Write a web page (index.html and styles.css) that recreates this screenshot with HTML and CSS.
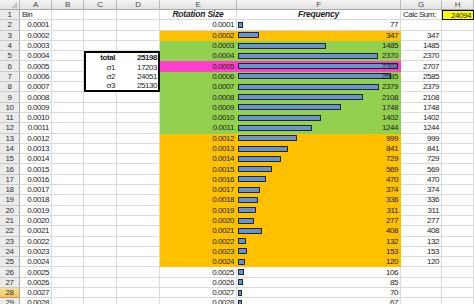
FILE: index.html
```html
<!DOCTYPE html>
<html lang="en">
<head>
  <meta charset="UTF-8">
  <meta name="viewport" content="width=device-width, initial-scale=1.0">
  <title>Rotation Size</title>
  <link rel="stylesheet" href="styles.css">
</head>
<body>
  <div class="sheet" id="sheet">
    <div class="stats">
      <span class="st-lbl bold">total</span><span class="st-val bold">25198</span>
      <span class="st-lbl">σ1</span><span class="st-val">17203</span>
      <span class="st-lbl">σ2</span><span class="st-val">24051</span>
      <span class="st-lbl">σ3</span><span class="st-val">25130</span>
    </div>
  </div>
  <script>
    const sheet = document.getElementById("sheet");
    const letters = ["", "A", "B", "C", "D", "E", "F", "G", "H"];

    // frequency for rows 2..29
    const freq = [77, 347, 1485, 2370, 2707, 2585, 2379, 2108, 1748, 1402, 1244,
      999, 841, 729, 569, 470, 374, 336, 311, 277, 408, 132, 153, 120, 106, 85, 70, 67];

    function fillClass(row) {
      if (row === 6) return "pk";
      if (row === 3 || (row >= 13 && row <= 25)) return "or";
      if (row >= 4 && row <= 12) return "gr";
      return "";
    }

    function cell(cls, text) {
      const div = document.createElement("div");
      div.className = "cell " + cls;
      if (text !== undefined && text !== "") {
        const span = document.createElement("span");
        span.textContent = text;
        div.appendChild(span);
      }
      sheet.appendChild(div);
      return div;
    }

    // column headers
    letters.forEach((l, i) => {
      const c = cell(i === 0 ? "hd corner" : "hd", l);
      if (i === 0) c.innerHTML = '<i class="tri"></i>';
    });

    for (let row = 1; row <= 29; row++) {
      cell(row === 28 ? "rh sel" : "rh", String(row));
      if (row === 1) {
        cell("", "Bin");
        cell(""); cell(""); cell("");
        cell("title", "Rotation Size");
        cell("title", "Frequency");
        cell("", "Calc Sum:");
        cell("num sum", "24094");
        continue;
      }
      const bin = ((row - 1) / 10000).toFixed(4);
      const v = freq[row - 2];
      const fill = fillClass(row);
      cell("num", bin);
      cell("");
      if (row < 5 || row > 8) { cell(""); cell(""); }
      cell("num " + fill, bin);
      const f = cell("freq " + fill);
      f.innerHTML = `<div class="bar" style="width:${Math.round(v * 0.0592)}px"></div><span class="val">${v}</span>`;
      cell("num", row >= 3 && row <= 25 ? String(v) : "");
      cell("");
    }
  </script>
</body>
</html>
```

FILE: styles.css
```css
body {
  margin: 0;
  background: #fff;
  font-family: "Liberation Sans", Arial, sans-serif;
  font-size: 8px;
  color: #1e1e1e;
  overflow: hidden;
}
.sheet {
  display: grid;
  grid-template-columns: 20px 32px 32px 33px 43px 77px 164px 41px 32px;
  grid-template-rows: 10px repeat(29, 10.3px);
  width: 474px;
  height: 304px;
  overflow: hidden;
  letter-spacing: -0.45px;
}
.cell {
  display: flex;
  align-items: center;
  box-sizing: border-box;
  padding: 0 2px;
  border-right: 1px solid #dadada;
  border-bottom: 1px solid #dadada;
  white-space: nowrap;
  overflow: hidden;
  line-height: 9px;
}
.num {
  justify-content: flex-end;
}
.hd {
  background: linear-gradient(#f4f4f4, #e1e1e1);
  border-right: 1px solid #b9b9b9;
  border-bottom: 1px solid #a9a9a9;
  justify-content: center;
  color: #4a4a4a;
}
.corner {
  justify-content: flex-end;
  align-items: flex-end;
  padding: 0 2px 1px 0;
}
.tri {
  width: 0;
  height: 0;
  border-left: 6px solid transparent;
  border-bottom: 6px solid #c4c4c4;
}
.rh {
  background: #ebebeb;
  border-right: 1px solid #a9a9a9;
  border-bottom: 1px solid #cbcbcb;
  justify-content: center;
  color: #333;
}
.rh.sel {
  background: linear-gradient(#fae19a, #f3c65e);
  border-bottom-color: #c9a044;
}
.or {
  background: #ffc000;
  border-color: #ffc000;
}
.gr {
  background: #92d050;
  border-color: #92d050;
}
.pk {
  background: #ff3fcc;
  border-color: #ff3fcc;
}
.title {
  justify-content: center;
  font-weight: bold;
  font-style: italic;
  font-size: 8.5px;
  letter-spacing: -0.2px;
}
.sum {
  background: #ffff00;
  border: 1px solid #000;
}
.freq {
  display: grid;
  align-items: center;
  padding: 0 2px 0 1px;
}
.freq > * {
  grid-area: 1 / 1;
}
.bar {
  justify-self: start;
  height: 6px;
  box-sizing: border-box;
  background: #6a93cb;
  border: 1px solid #1d2733;
}
.val {
  justify-self: end;
}
.stats {
  grid-column: 4 / 6;
  grid-row: 6 / 10;
  display: grid;
  grid-template-columns: 31px 1fr;
  grid-template-rows: repeat(4, 1fr);
  border: 2px solid #000;
  background: #fff;
  z-index: 1;
}
.st-lbl,
.st-val {
  display: flex;
  align-items: center;
  justify-content: flex-end;
  padding-right: 2px;
}
.st-val {
  padding-right: 1px;
}
.bold {
  font-weight: bold;
}
```
